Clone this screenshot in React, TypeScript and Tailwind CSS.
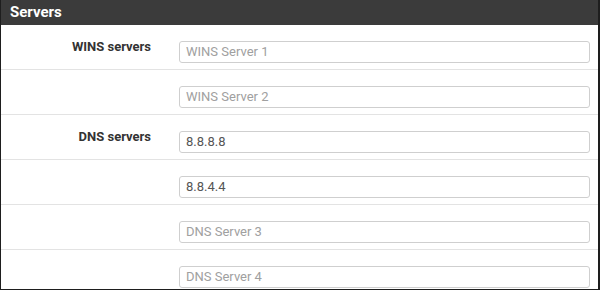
const rows: { label?: string; value?: string; placeholder: string }[] = [
  { label: "WINS servers", placeholder: "WINS Server 1" },
  { placeholder: "WINS Server 2" },
  { label: "DNS servers", value: "8.8.8.8", placeholder: "DNS Server 1" },
  { value: "8.8.4.4", placeholder: "DNS Server 2" },
  { placeholder: "DNS Server 3" },
  { placeholder: "DNS Server 4" },
]

const App = () => {
  return (
    <div className="w-[600px] h-[290px] overflow-hidden bg-white font-['Roboto',sans-serif]">
      <div className="h-[290px] border-l border-r-2 border-b border-[#1e1e1e] flex flex-col">
        <div className="h-[25px] shrink-0 bg-[#3b3b3b] text-white font-bold text-[15px] leading-[25px] pl-[9px]">
          Servers
        </div>
        {rows.map((row, i) => (
          <div key={i} className="h-[45px] shrink-0 flex border-b border-[#e3e3e3]">
            <div className="w-[164px] shrink-0 pr-[14px] pt-[14px] text-right text-[13px] leading-[16px] font-bold text-[#333]">
              {row.label}
            </div>
            <div className="flex-1 pl-[14px] pr-[8px] pt-[14px]">
              <input
                readOnly
                defaultValue={row.value}
                placeholder={row.placeholder}
                className="w-full h-[22px] border border-[#cfcfcf] rounded-[3px] px-[6px] text-[13px] text-[#555] placeholder:text-[#a0a0a0] outline-none font-['Roboto',sans-serif]"
              />
            </div>
          </div>
        ))}
      </div>
    </div>
  )
}

export default App
